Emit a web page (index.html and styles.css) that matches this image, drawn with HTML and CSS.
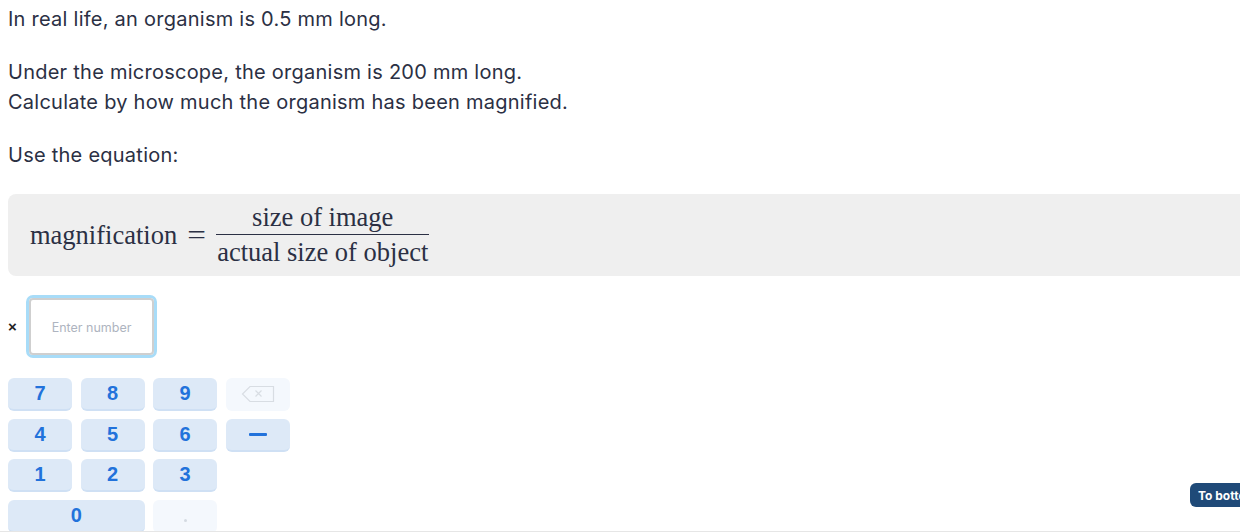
FILE: index.html
```html
<!DOCTYPE html>
<html>
<head>
<meta charset="utf-8">
<link rel="stylesheet" href="styles.css">
</head>
<body>
<div class="page">
  <p class="txt">In real life, an organism is 0.5 mm long.</p>
  <p class="txt">Under the microscope, the organism is 200 mm long.<br>Calculate by how much the organism has been magnified.</p>
  <p class="txt">Use the equation:</p>
  <div class="eqbox">
    <span class="mword">magnification</span>
    <span class="meq">=</span>
    <span class="frac">
      <span class="num">size of image</span>
      <span class="den">actual size of object</span>
    </span>
  </div>
  <div class="answer">
    <span class="times">×</span>
    <div class="inputring"><div class="input">Enter number</div></div>
  </div>
  <div class="keypad">
    <button class="key">7</button>
    <button class="key">8</button>
    <button class="key">9</button>
    <button class="key key-dis"><svg width="34" height="18" viewBox="0 0 34 18"><path d="M9 1.5 H32.5 V16.5 H9 L1.5 9 Z" fill="none" stroke="#d8dde3" stroke-width="1.2"/><path d="M14.5 5.5 L20.5 11.5 M20.5 5.5 L14.5 11.5" stroke="#d8dde3" stroke-width="1.2"/></svg></button>
    <button class="key">4</button>
    <button class="key">5</button>
    <button class="key">6</button>
    <button class="key"><span class="minus"></span></button>
    <button class="key">1</button>
    <button class="key">2</button>
    <button class="key">3</button>
    <span></span>
    <button class="key key-wide">0</button>
    <button class="key key-dis"><span class="dot"></span></button>
  </div>
</div>
<div class="bottomline"></div>
<button class="tobottom">To bottom</button>
</body>
</html>
```
FILE: styles.css
```css
html, body {
  margin: 0;
  padding: 0;
  background: #ffffff;
  overflow: hidden;
}
.page {
  padding: 4px 8px 0 8px;
  font-family: "Inter", "Liberation Sans", sans-serif;
  color: #2b3044;
}
.txt {
  margin: 0 0 23px 0;
  font-size: 20px;
  line-height: 30px;
  letter-spacing: 0.25px;
}
.eqbox {
  margin-top: 24px;
  margin-right: -20px;
  height: 82px;
  background: #efefef;
  border-radius: 8px;
  display: flex;
  align-items: center;
  padding-left: 22px;
  font-family: "Liberation Serif", "DejaVu Serif", serif;
  font-size: 26.5px;
  color: #2b3044;
}
.meq {
  display: inline-block;
  margin: 0 12px 0 12px;
  transform: scaleX(1.25);
}
.frac {
  display: inline-flex;
  flex-direction: column;
  align-items: center;
}
.num {
  padding: 0 4px 2px;
  line-height: 30px;
}
.den {
  border-top: 1px solid #2b3044;
  padding: 1px 1px 0;
  line-height: 32px;
}
.answer {
  margin-top: 19px;
  display: flex;
  align-items: center;
}
.times {
  font-family: "Liberation Sans", sans-serif;
  font-size: 15px;
  font-weight: bold;
  color: #222;
  width: 18px;
}
.inputring {
  border: 3px solid #a8dcf8;
  border-radius: 7px;
}
.input {
  width: 121px;
  height: 51px;
  padding-top: 2px;
  border: 2px solid #cfcfcf;
  border-radius: 4px;
  box-sizing: content-box;
  display: flex;
  align-items: center;
  justify-content: center;
  font-size: 12.5px;
  color: #aeb4c0;
  font-family: "Inter", "Liberation Sans", sans-serif;
}
.keypad {
  margin-top: 20px;
  display: grid;
  grid-template-columns: repeat(4, 64px);
  grid-auto-rows: 33px;
  column-gap: 8.5px;
  row-gap: 7.5px;
}
.key {
  border: none;
  margin: 0;
  padding: 0;
  background: #dde9f7;
  border-bottom: 2px solid #cfe0f4;
  border-radius: 6px;
  color: #2272db;
  font-family: "Liberation Sans", Arial, sans-serif;
  font-weight: bold;
  font-size: 20px;
  display: flex;
  align-items: center;
  justify-content: center;
}
.key-wide {
  grid-column: span 2;
}
.key-dis {
  background: #f4f8fd;
  border-bottom-color: #f4f8fd;
}
.minus {
  display: block;
  width: 18px;
  height: 3px;
  border-radius: 1px;
  background: #2272db;
}
.dot {
  display: block;
  width: 3px;
  height: 3px;
  border-radius: 50%;
  background: #d4dae2;
  margin-top: 10px;
}
.bottomline {
  position: fixed;
  left: 0;
  right: 0;
  bottom: 0;
  height: 1px;
  background: #e6e6e6;
}
.tobottom {
  position: fixed;
  left: 1190px;
  top: 483px;
  height: 24px;
  padding: 0 8px;
  border: none;
  border-radius: 6px;
  background: #1f4a78;
  color: #fff;
  font-family: "Inter", "Liberation Sans", sans-serif;
  font-weight: bold;
  font-size: 12px;
  white-space: nowrap;
}
```
